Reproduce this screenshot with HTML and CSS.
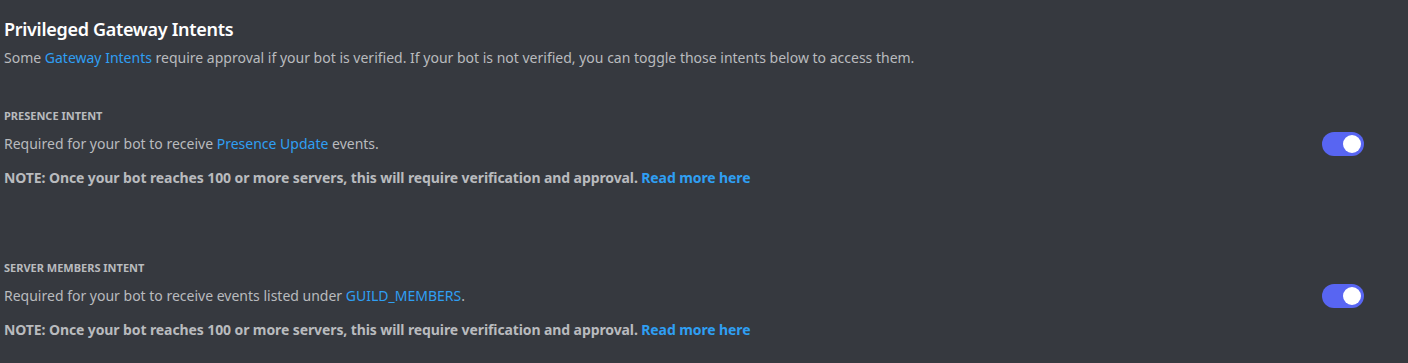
FILE: index.html
```html
<!DOCTYPE html>
<html lang="en">
<head>
    <meta charset="UTF-8">
    <title>Privileged Gateway Intents</title>
    <link rel="stylesheet" href="styles.css">
</head>
<body>
    <div class="intents">
        <h2 class="title">Privileged Gateway Intents</h2>
        <p class="subtitle">Some <a href="#">Gateway Intents</a> require approval if your bot is verified. If your bot is not verified, you can toggle those intents below to access them.</p>

        <!-- Presence -->
        <div class="intent">
            <h5 class="intent-label">Presence Intent</h5>
            <div class="intent-row">
                <p class="intent-desc">Required for your bot to receive <a href="#">Presence Update</a> events.</p>
                <label class="switch">
                    <input type="checkbox" checked>
                    <span class="slider"></span>
                </label>
            </div>
            <p class="intent-note">NOTE: Once your bot reaches 100 or more servers, this will require verification and approval. <a href="#">Read more here</a></p>
        </div>

        <!-- Server members -->
        <div class="intent">
            <h5 class="intent-label">Server Members Intent</h5>
            <div class="intent-row">
                <p class="intent-desc">Required for your bot to receive events listed under <a href="#">GUILD_MEMBERS</a>.</p>
                <label class="switch">
                    <input type="checkbox" checked>
                    <span class="slider"></span>
                </label>
            </div>
            <p class="intent-note">NOTE: Once your bot reaches 100 or more servers, this will require verification and approval. <a href="#">Read more here</a></p>
        </div>
    </div>
</body>
</html>
```

FILE: styles.css
```css
body {
    margin: 0;
    padding: 0;
    background-color: #36393f;
    color: #b9bbbe;
    font-family: "Noto Sans", "Open Sans", sans-serif;
}
a {
    color: #2f9ff3;
    text-decoration: none;
}
.intents {
    padding: 16px 4px 0 4px;
}
.title {
    margin: 0;
    color: #fff;
    font-size: 18px;
    font-weight: 600;
    line-height: 26px;
    letter-spacing: -0.3px;
}
.subtitle {
    margin: 6px 0 0 0;
    font-size: 14px;
    line-height: 20px;
}
.intent {
    margin-top: 40px;
}
.intent + .intent {
    margin-top: 72px;
}
.intent-label {
    margin: 0;
    font-size: 11px;
    font-weight: 700;
    text-transform: uppercase;
    line-height: 16px;
}
.intent-row {
    display: flex;
    align-items: center;
    justify-content: space-between;
    margin-top: 8px;
    padding-right: 40px;
}
.intent-desc {
    margin: 0;
    font-size: 14px;
    line-height: 20px;
}
.intent-note {
    margin: 12px 0 0 0;
    font-size: 14px;
    font-weight: 700;
    line-height: 20px;
    letter-spacing: -0.1px;
}
.switch {
    position: relative;
    display: block;
    width: 42px;
    height: 24px;
}
.switch input {
    display: none;
}
.slider {
    display: block;
    width: 42px;
    height: 24px;
    border-radius: 12px;
    background-color: #5865f2;
}
.slider::after {
    content: "";
    position: absolute;
    top: 3px;
    right: 3px;
    width: 18px;
    height: 18px;
    border-radius: 50%;
    background-color: #fff;
}
```
